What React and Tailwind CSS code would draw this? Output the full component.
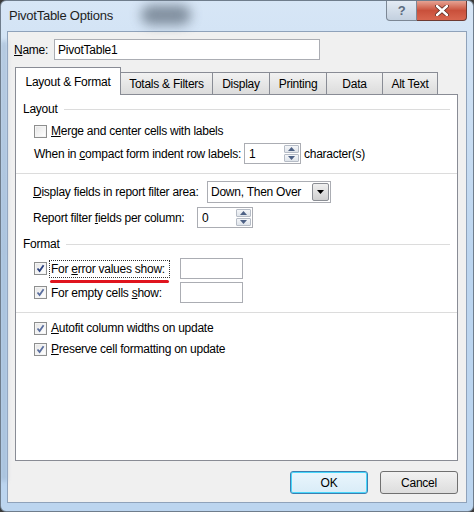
import React from "react";

const font = { fontFamily: '"Liberation Sans", Arial, sans-serif', letterSpacing: "-0.25px" };

function Check({ checked, focused }) {
  return (
    <span className="flex h-[13px] w-[13px] shrink-0 items-center justify-center border border-[#8e8f8f] bg-gradient-to-br from-[#dcdcdc] to-[#f7f7f7]">
      <span className="flex h-[11px] w-[11px] items-center justify-center border border-[#f4f4f4] bg-gradient-to-br from-[#e6e6e6] to-white">
        {checked && (
          <svg width="9" height="9" viewBox="0 0 9 9">
            <path
              d="M1.5 4.5 L3.6 7 L7.6 1.3"
              fill="none"
              stroke={focused ? "#2a3f7e" : "#5a6e9e"}
              strokeWidth="1.8"
            />
          </svg>
        )}
      </span>
    </span>
  );
}

function Spin({ value, width }) {
  return (
    <div className={`flex h-[21px] items-stretch border border-[#abadb3] bg-white ${width}`}>
      <span className="flex flex-1 items-center pl-[4px]">{value}</span>
      <span className="my-[1px] mr-[1px] flex w-[15px] flex-col gap-[1px]">
        <span className="flex flex-1 items-center justify-center rounded-[1px] border border-[#b6bcc6] bg-gradient-to-b from-[#f4f6f9] to-[#dfe4ea]">
          <svg width="7" height="4" viewBox="0 0 7 4"><path d="M0 4 L3.5 0 L7 4Z" fill="#4d6185" /></svg>
        </span>
        <span className="flex flex-1 items-center justify-center rounded-[1px] border border-[#b6bcc6] bg-gradient-to-b from-[#f4f6f9] to-[#dfe4ea]">
          <svg width="7" height="4" viewBox="0 0 7 4"><path d="M0 0 L3.5 4 L7 0Z" fill="#4d6185" /></svg>
        </span>
      </span>
    </div>
  );
}

function GroupTitle({ children }) {
  return (
    <div className="flex h-[18px] items-center gap-[6px] pr-[7px]">
      <span>{children}</span>
      <span className="h-px flex-1 bg-[#dcdcdc]" />
    </div>
  );
}

function CheckRow({ checked, focused, marked, children }) {
  return (
    <label className="flex h-[18px] items-center gap-[4px] whitespace-nowrap pl-[11px]">
      <Check checked={checked} focused={focused} />
      <span
        className={
          focused
            ? "relative -ml-[1px] inline-block pl-[1px] pr-[4px] leading-[16px] outline outline-1 outline-dotted outline-[#333]"
            : ""
        }
      >
        {children}
        {marked && (
          <span className="absolute -bottom-[6px] left-0 right-0 h-[3px] rounded-full bg-[#e0141e]" />
        )}
      </span>
    </label>
  );
}

const tabs = ["Totals & Filters", "Display", "Printing", "Data", "Alt Text"];
const tabWidths = ["w-[92px]", "w-[58px]", "w-[58px]", "w-[57px]", "w-[56px]"];

export default function App() {
  return (
    <div className="h-[512px] w-[474px] whitespace-nowrap bg-[#3b3b3b] text-[12px] text-black" style={font}>
      <div className="relative flex h-full flex-col overflow-hidden rounded-[6px] border border-[#6f7d8c] bg-gradient-to-b from-[#d7e6f6] via-[#bcd5ef] to-[#bcd5ef]">
        {/* blurred window behind the glass */}
        <div className="absolute left-[140px] top-[4px] h-[20px] w-[50px] rounded-full bg-[#5d6b7a] opacity-70 blur-[6px]" />
        <div className="absolute left-0 top-[40px] h-[440px] w-[6px] bg-[#9fb7d2] opacity-70 blur-[2px]" />

        {/* title bar */}
        <div className="relative flex h-[30px] items-start">
          <span className="mt-[5px] pl-[8px] text-[13px] text-[#1e1e1e]">PivotTable Options</span>
          <div className="ml-auto mr-[6px] flex">
            <button className="flex h-[20px] w-[31px] items-center justify-center rounded-bl-[4px] border border-t-0 border-[#7c8795] bg-gradient-to-b from-[#e3ebf4] to-[#c3d0df] text-[13px] font-bold text-[#5b6b7f]">
              ?
            </button>
            <button className="flex h-[20px] w-[50px] items-center justify-center rounded-br-[4px] border border-l-0 border-t-0 border-[#6d3a33] bg-gradient-to-b from-[#e5a293] via-[#c9503b] to-[#d8664f]">
              <svg width="14" height="11" viewBox="0 0 14 11">
                <path d="M2 1 L12 10 M12 1 L2 10" stroke="#5a2a22" strokeWidth="4" strokeLinecap="round" />
                <path d="M2 1 L12 10 M12 1 L2 10" stroke="#ffffff" strokeWidth="2.4" strokeLinecap="round" />
              </svg>
            </button>
          </div>
        </div>

        {/* client area */}
        <div className="mx-[6px] flex flex-1 flex-col border border-[#8fa2ba] bg-[#f0f0f0]">
          <div className="flex items-center gap-[6px] pl-[6px] pt-[7px]">
            <span>
              <u>N</u>ame:
            </span>
            <div className="flex h-[21px] w-[266px] items-center border border-[#abadb3] bg-white pl-[3px]">
              PivotTable1
            </div>
          </div>

          {/* tabs */}
          <div className="relative z-10 mt-[7px] flex items-end pl-[7px]">
            <div className="-mb-px flex h-[28px] w-[106px] items-start justify-center border border-b-0 border-[#898c95] bg-white pt-[5px]">
              Layout &amp; Format
            </div>
            {tabs.map((t, i) => (
              <div
                key={t}
                className={`flex h-[22px] items-center justify-center border border-b-0 border-[#898c95] bg-gradient-to-b from-[#f2f2f2] to-[#dcdcdc] ${tabWidths[i]} ${i === 0 ? "border-l-0" : "-ml-px"}`}
              >
                {t}
              </div>
            ))}
          </div>

          {/* panel */}
          <div className="ml-[7px] mr-[8px] flex h-[367px] flex-col border border-[#898c95] bg-white pl-[7px]">
            <div className="mt-[5px]">
              <GroupTitle>Layout</GroupTitle>
            </div>
            <div className="mt-[4px]">
              <CheckRow>
                <u>M</u>erge and center cells with labels
              </CheckRow>
            </div>
            <div className="mt-[3px] flex h-[21px] items-center pl-[11px]">
              <span className="w-[210px]">
                When in <u>c</u>ompact form indent row labels:
              </span>
              <Spin value="1" width="w-[57px]" />
              <span className="ml-[3px]">character(s)</span>
            </div>
            <div className="-ml-[7px] mt-[9px] h-px bg-[#dcdcdc]" />
            <div className="mt-[7px] flex h-[22px] items-center pl-[10px]">
              <span className="w-[174px]">
                <u>D</u>isplay fields in report filter area:
              </span>
              <div className="flex h-[22px] w-[124px] items-stretch border border-[#abadb3] bg-white">
                <span className="flex flex-1 items-center pl-[3px]">Down, Then Over</span>
                <span className="m-[1px] flex w-[17px] items-center justify-center rounded-[2px] border border-[#8b8e94] bg-gradient-to-b from-[#f0f0f0] to-[#cfcfcf]">
                  <svg width="7" height="4" viewBox="0 0 7 4"><path d="M0 0 L3.5 4 L7 0Z" fill="#000" /></svg>
                </span>
              </div>
            </div>
            <div className="mt-[4px] flex h-[21px] items-center pl-[10px]">
              <span className="w-[164px]">
                Report filter <u>f</u>ields per column:
              </span>
              <Spin value="0" width="w-[56px]" />
            </div>

            <div className="mt-[7px]">
              <GroupTitle>Format</GroupTitle>
            </div>
            <div className="mt-[5px] flex h-[21px] items-center">
              <div className="w-[157px]">
                <CheckRow checked focused marked>
                  For <u>e</u>rror values show:
                </CheckRow>
              </div>
              <div className="h-[21px] w-[63px] border border-[#abadb3] bg-white" />
            </div>
            <div className="mt-[3px] flex h-[21px] items-center">
              <div className="w-[157px]">
                <CheckRow checked>
                  For empty cells <u>s</u>how:
                </CheckRow>
              </div>
              <div className="h-[21px] w-[63px] border border-[#abadb3] bg-white" />
            </div>
            <div className="-ml-[7px] mt-[9px] h-px bg-[#dcdcdc]" />
            <div className="mt-[6px]">
              <CheckRow checked>
                <u>A</u>utofit column widths on update
              </CheckRow>
            </div>
            <div className="mt-[3px]">
              <CheckRow checked>
                <u>P</u>reserve cell formatting on update
              </CheckRow>
            </div>
          </div>

          {/* buttons */}
          <div className="mr-[8px] mt-[10px] flex justify-end gap-[12px]">
            <button className="flex h-[23px] w-[78px] items-center justify-center rounded-[3px] border border-[#3c7fb1] bg-gradient-to-b from-[#eaf6fd] to-[#d9ecf7] shadow-[inset_0_0_0_1px_#48d7fb]">
              OK
            </button>
            <button className="flex h-[23px] w-[78px] items-center justify-center rounded-[3px] border border-[#707070] bg-gradient-to-b from-[#f2f2f2] to-[#dddddd]">
              Cancel
            </button>
          </div>
        </div>
        <div className="h-[8px]" />
      </div>
    </div>
  );
}
